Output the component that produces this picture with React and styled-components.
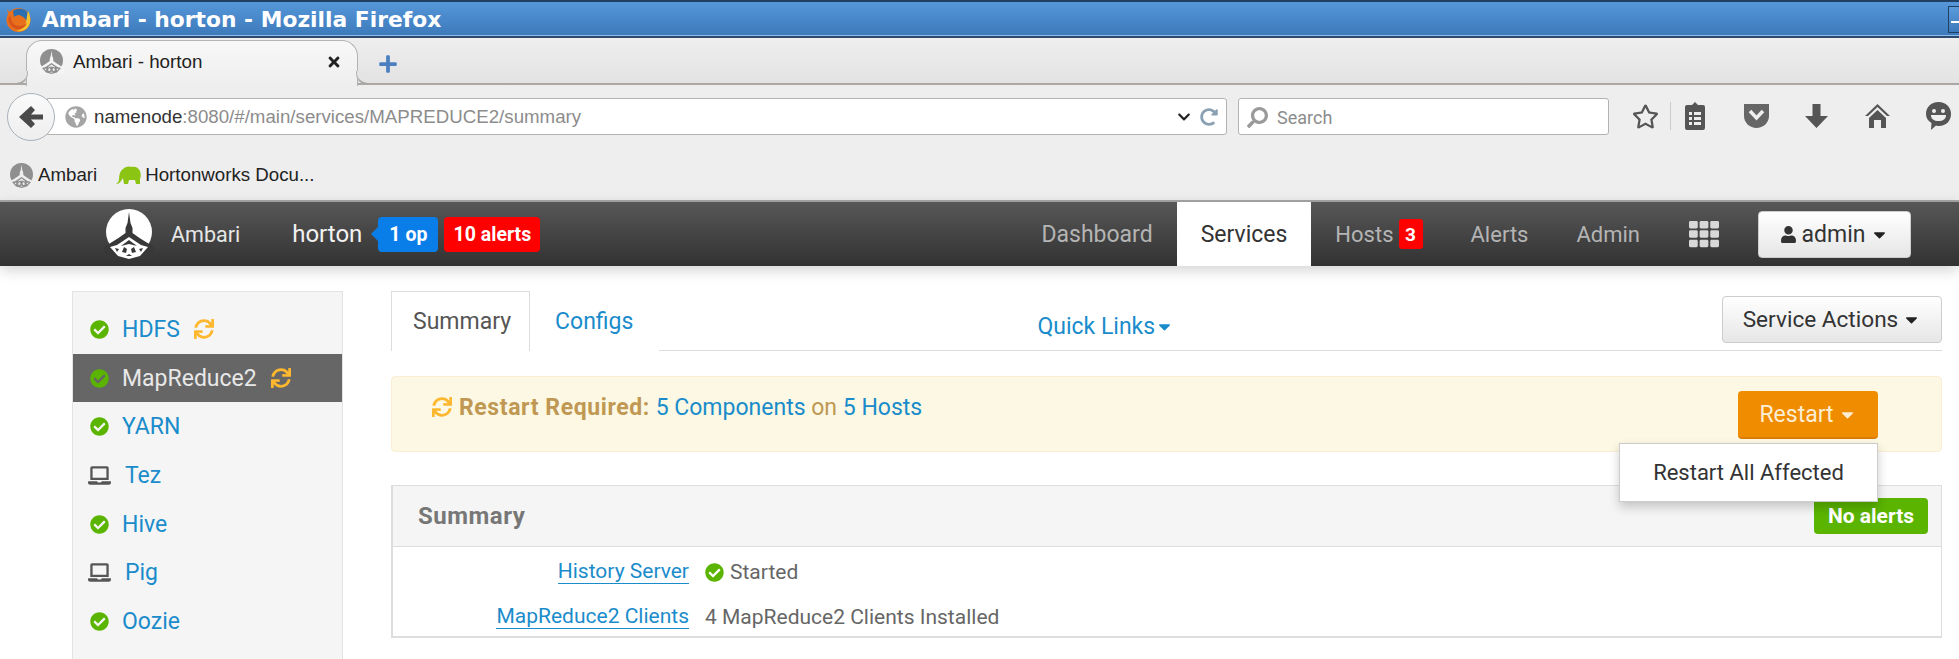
import React from "react";
import styled, { createGlobalStyle } from "styled-components";
import { FaCheckCircle, FaSync, FaLaptop, FaUser, FaTh, FaCaretDown, FaRegStar, FaChevronDown, FaRedoAlt, FaSearch, FaTimes, FaPlus, FaGlobeAmericas } from "react-icons/fa";

const GlobalStyle = createGlobalStyle`
  html, body {
    margin: 0;
    padding: 0;
    background: #fff;
    font-family: Roboto, "Liberation Sans", sans-serif;
    overflow: hidden;
  }
`;

const Page = styled.div`
  width: 1959px;
  height: 659px;
  overflow: hidden;
  display: flex;
  flex-direction: column;
`;

/* ---- browser chrome ---- */

const TitleBar = styled.div`
  height: 34px;
  padding: 0 0 0 6px;
  display: flex;
  align-items: center;
  gap: 11px;
  color: #fff;
  font: bold 21.8px "DejaVu Sans", sans-serif;
  border-top: 2px solid #1f3f63;
  border-bottom: 2px solid #2b4a6e;
  box-shadow: inset 0 -1px 0 #8fbbe8;
  background: linear-gradient(#5597d9, #3c79ba);
`;

const WindowButton = styled.div`
  margin-left: auto;
  width: 10px;
  height: 25px;
  border: 1px solid #1f3f63;
  border-right: 0;
  background: linear-gradient(#5a9bdc, #3c79ba);
  position: relative;

  &::after {
    content: "";
    position: absolute;
    left: 2px;
    bottom: 9px;
    width: 8px;
    height: 2px;
    background: #fff;
  }
`;

const TabStrip = styled.div`
  height: 47px;
  box-sizing: border-box;
  padding: 2px 0 0 26px;
  display: flex;
  align-items: stretch;
  background: linear-gradient(#efeeee, #e4e3e3);
  border-bottom: 2px solid #aaa7a5;
`;

const BrowserTab = styled.div`
  width: 332px;
  height: 46px;
  box-sizing: border-box;
  padding: 0 15px 4px 12px;
  display: flex;
  align-items: center;
  gap: 9px;
  font: 18.8px "Liberation Sans", sans-serif;
  color: #222;
  background: linear-gradient(#f8f8f8, #efeeee);
  border: 1px solid #b5b3b1;
  border-bottom: 0;
  border-radius: 16px 16px 0 0;
  position: relative;
  z-index: 1;

  &::before,
  &::after {
    content: "";
    position: absolute;
    bottom: 1px;
    width: 12px;
    height: 14px;
    box-sizing: border-box;
    background: #e5e4e4;
    border-bottom: 2px solid #aaa7a5;
  }

  &::before {
    left: -11px;
    border-right: 1px solid #b5b3b1;
    border-bottom-right-radius: 12px;
  }

  &::after {
    right: -11px;
    border-left: 1px solid #b5b3b1;
    border-bottom-left-radius: 12px;
  }
`;

const TabClose = styled(FaTimes)`
  margin-left: auto;
  font-size: 16px;
  color: #222;
`;

const NewTab = styled(FaPlus)`
  margin: 14px 0 0 20px;
  font-size: 20px;
  color: #4b7fc0;
`;

const ChromeBody = styled.div`
  height: 115px;
  background: #efeeee;
  border-bottom: 2px solid #a9a7a5;
  display: flex;
  flex-direction: column;
`;

const NavToolbar = styled.div`
  height: 62px;
  padding-left: 7px;
  display: flex;
  align-items: center;
`;

const BackButton = styled.div`
  width: 48px;
  height: 48px;
  box-sizing: border-box;
  flex: none;
  display: flex;
  align-items: center;
  justify-content: center;
  border-radius: 50%;
  border: 1px solid #a9b1b9;
  background: linear-gradient(#fafafa, #eeeeee);
  position: relative;
  z-index: 1;
  margin-top: 2px;
`;

const UrlBar = styled.div`
  width: 1180px;
  height: 37px;
  box-sizing: border-box;
  margin-left: -8px;
  padding: 2px 8px 0 17px;
  display: flex;
  align-items: center;
  background: #fff;
  border: 1px solid #b5b3b1;
  border-radius: 0 3px 3px 0;
  font: 18.7px "Liberation Sans", sans-serif;
  color: #8c8c8c;
`;

const Globe = styled(FaGlobeAmericas)`
  font-size: 22px;
  color: #a5a5a5;
  margin-right: 7px;
`;

const Host = styled.span`
  color: #333;
`;

const UrlIcons = styled.div`
  margin-left: auto;
  display: flex;
  align-items: center;
  gap: 9px;
`;

const Chevron = styled(FaChevronDown)`
  font-size: 14px;
  color: #222;
`;

const Reload = styled(FaRedoAlt)`
  font-size: 18px;
  color: #8aa0b3;
`;

const SearchBar = styled.div`
  width: 371px;
  height: 37px;
  box-sizing: border-box;
  margin-left: 11px;
  padding: 2px 0 0 8px;
  display: flex;
  align-items: center;
  gap: 9px;
  background: #fff;
  border: 1px solid #b5b3b1;
  border-radius: 3px;
  font: 18px Roboto, sans-serif;
  color: #8c8c8c;
`;

const SearchIcon = styled(FaSearch)`
  font-size: 21px;
  color: #9a9a9a;
  transform: scaleX(-1);
`;

const ToolIcons = styled.div`
  margin-left: 23px;
  display: flex;
  align-items: center;
  color: #555;
`;

const ToolSlot = styled.div`
  width: ${(p) => p.$w}px;
  display: flex;
  align-items: center;
`;

const Separator = styled.div`
  width: 1px;
  height: 28px;
  background: #ccc;
  margin-right: 12px;
`;

const Bookmarks = styled.div`
  height: 51px;
  box-sizing: border-box;
  padding: 5px 0 0 9px;
  display: flex;
  align-items: center;
  font: 18.7px "Liberation Sans", sans-serif;
  color: #222;
`;

const Bookmark = styled.div`
  display: flex;
  align-items: center;
  gap: 4px;
  margin-right: ${(p) => p.$gap || 0}px;
`;

/* ---- ambari top bar ---- */

const TopBar = styled.div`
  height: 64px;
  flex: none;
  display: flex;
  align-items: center;
  padding-left: 104px;
  background: linear-gradient(#575757, #323232);
  box-shadow: 0 4px 14px rgba(0, 0, 0, 0.18);
  position: relative;
  z-index: 2;
`;

const Brand = styled.span`
  margin-left: 17px;
  font-size: 21.5px;
  color: #e6e6e6;
`;

const Cluster = styled.span`
  margin-left: 52px;
  font-size: 24px;
  color: #f2f2f2;
`;

const OpsBadge = styled.span`
  margin-left: 16px;
  width: 60px;
  height: 35px;
  border-radius: 4px;
  background: #0a7ee8;
  color: #fff;
  font-size: 19.5px;
  font-weight: bold;
  display: flex;
  align-items: center;
  justify-content: center;
  position: relative;

  &::before {
    content: "";
    position: absolute;
    left: -7px;
    top: 10px;
    border: 7px solid transparent;
    border-left: 0;
    border-right-color: #0a7ee8;
  }
`;

const AlertsBadge = styled(OpsBadge)`
  margin-left: 6px;
  width: 96px;
  background: #f00;

  &::before {
    display: none;
  }
`;

const NavLinks = styled.nav`
  margin-left: auto;
  display: flex;
  align-items: center;
  height: 100%;
  padding-right: 48px;
`;

const NavItem = styled.a`
  height: 100%;
  box-sizing: border-box;
  padding: 0 24px;
  display: flex;
  align-items: center;
  font-size: ${(p) => (p.$compact ? 22 : 23)}px;
  color: ${(p) => (p.$active ? "#333" : "#b4b4b4")};
  background: ${(p) => (p.$active ? "#fff" : "transparent")};
`;

const CountBadge = styled.span`
  margin-left: 5px;
  width: 24px;
  height: 30px;
  border-radius: 3px;
  background: #f00;
  color: #fff;
  font-size: 19px;
  font-weight: bold;
  display: flex;
  align-items: center;
  justify-content: center;
`;

const AppsIcon = styled(FaTh)`
  margin: 0 39px 0 25px;
  font-size: 30px;
  color: #d8d8d8;
`;

const AdminButton = styled.button`
  width: 153px;
  height: 47px;
  padding: 0;
  display: flex;
  align-items: center;
  justify-content: center;
  gap: 5px;
  font: 23px Roboto, sans-serif;
  color: #333;
  border: 1px solid #ccc;
  border-radius: 4px;
  background: linear-gradient(#fff, #e6e6e6);
`;

const Caret = styled(FaCaretDown)`
  font-size: 19px;
  color: ${(p) => p.$color || "#222"};
`;

/* ---- page body ---- */

const Main = styled.div`
  flex: 1;
  display: flex;
  padding: 25px 0 0 72px;
`;

const Sidebar = styled.aside`
  width: 271px;
  box-sizing: border-box;
  padding-top: 13px;
  background: #f5f5f5;
  border: 1px solid #e3e3e3;
  border-bottom: 0;
`;

const ServiceRow = styled.div`
  height: 48.7px;
  padding-left: 17px;
  display: flex;
  align-items: center;
  font-size: 23px;
  color: ${(p) => (p.$active ? "#e8e8e8" : "#1a8ccb")};
  background: ${(p) => (p.$active ? "#666" : "transparent")};
`;

const Healthy = styled(FaCheckCircle)`
  font-size: ${(p) => p.$size || 19}px;
  color: #5ab400;
  flex: none;
  margin-right: ${(p) => p.$gap || 13}px;
`;

const Client = styled(FaLaptop)`
  font-size: 23px;
  color: #555;
  margin: 0 14px 0 -2px;
`;

const Restarting = styled(FaSync)`
  font-size: 20px;
  color: #fdb82f;
  margin-left: ${(p) => p.$left || 14}px;
  flex: none;
`;

const Content = styled.section`
  width: 1551px;
  margin-left: 48px;
`;

const TabRow = styled.div`
  height: 60px;
  box-sizing: border-box;
  display: flex;
  align-items: stretch;
  border-bottom: 1px solid #ddd;
  font-size: 23px;
`;

const PageTab = styled.a`
  padding: ${(p) => (p.$active ? "0 18px 1px 21px" : "0 25px 1px 24px")};
  height: 60px;
  box-sizing: border-box;
  display: flex;
  align-items: center;
  color: ${(p) => (p.$active ? "#555" : "#1a8ccb")};
  background: #fff;
  border: 1px solid ${(p) => (p.$active ? "#ddd" : "transparent")};
  border-bottom: 0;
`;

const QuickLinks = styled.a`
  margin: 21px 0 0 378px;
  height: 28px;
  display: flex;
  align-items: center;
  color: #1a8ccb;
`;

const ServiceActions = styled.button`
  margin: 5px 0 0 auto;
  width: 220px;
  height: 47px;
  padding: 0;
  display: flex;
  align-items: center;
  justify-content: center;
  gap: 4px;
  font: 22.6px Roboto, sans-serif;
  color: #333;
  border: 1px solid #ccc;
  border-radius: 4px;
  background: linear-gradient(#fff, #e6e6e6);
`;

const RestartAlert = styled.div`
  margin-top: 25px;
  height: 76px;
  box-sizing: border-box;
  padding: 14px 63px 0 39px;
  display: flex;
  align-items: flex-start;
  justify-content: space-between;
  font-size: 23px;
  color: #c09853;
  background: #fcf8e3;
  border: 1px solid #fbeed5;
  border-radius: 4px;
`;

const AlertText = styled.div`
  height: 32px;
  display: flex;
  align-items: center;
`;

const AlertLine = styled.span`
  margin-left: 7px;
`;

const Bold = styled.strong`
  font-weight: bold;
  letter-spacing: 0.6px;
`;

const BlueLink = styled.a`
  color: #1a8ccb;
`;

const RestartWrap = styled.div`
  position: relative;
`;

const RestartButton = styled.button`
  width: 140px;
  height: 48px;
  padding: 0;
  display: flex;
  align-items: center;
  justify-content: center;
  gap: 4px;
  font: 23px Roboto, sans-serif;
  color: #fbeed5;
  border: 0;
  border-bottom: 2px solid #d97c00;
  border-radius: 4px;
  background: #f08c00;
`;

const DropMenu = styled.div`
  position: absolute;
  top: 52px;
  right: 0;
  width: 259px;
  height: 59px;
  box-sizing: border-box;
  display: flex;
  align-items: center;
  justify-content: center;
  font-size: 22px;
  color: #333;
  white-space: nowrap;
  background: #fff;
  border: 1px solid #ccc;
  box-shadow: 0 5px 10px rgba(0, 0, 0, 0.2);
  z-index: 3;
`;

const Panel = styled.div`
  margin-top: 33px;
  height: 153px;
  box-sizing: border-box;
  border: 2px solid #ddd;
  border-top-width: 1px;
  border-right-width: 1px;
`;

const PanelHead = styled.div`
  height: 61px;
  box-sizing: border-box;
  padding: 0 13px 0 25px;
  display: flex;
  align-items: center;
  justify-content: space-between;
  background: #f5f5f5;
  border-bottom: 1px solid #ddd;
`;

const PanelTitle = styled.h3`
  margin: 0;
  font-size: 24px;
  letter-spacing: 0.5px;
  font-weight: bold;
  color: #777;
`;

const GoodBadge = styled.span`
  width: 114px;
  height: 36px;
  display: flex;
  align-items: center;
  justify-content: center;
  border-radius: 4px;
  font-size: 21px;
  font-weight: bold;
  color: #fff;
  background: #5ab400;
`;

const PanelBody = styled.div`
  padding-top: 3px;
`;

const SummaryRow = styled.div`
  height: 44.5px;
  display: grid;
  grid-template-columns: 296px 1fr;
  column-gap: 16px;
  align-items: center;
  font-size: 21px;
  color: #666;
`;

const SummaryLabel = styled.a`
  justify-self: end;
  color: #1a8ccb;
  border-bottom: 1px solid #1a8ccb;
  line-height: 23px;
`;

const SummaryValue = styled.div`
  display: flex;
  align-items: center;
`;

/* ---- drawings ---- */

const AmbariLogo = ({ size, disc = "#fff", dark = "#383838", speck = "#fff" }) => (
  <svg width={size} height={size} viewBox="0 0 50 50" style={{ flex: "none" }}>
    <circle cx="25" cy="23" r="23" fill={disc} />
    <path d="M25 3l1.500 11 2 5v5l7 5 14.500 9v12H0V38l14.500-9 7-5v-5l2-5z" fill={dark} />
    <path d="M25 28l12 8 7 2-8 9-11 3-11-3-8-9 7-2z" fill={speck} />
    <path d="M25 31l8 6-8-2-8 2zM20 38l3 2-1 4-4-1zM30 38l-3 2 1 4 4-1zM11 39l4 1-2 3zM39 39l-4 1 2 3zM22 47h6l-3-2z" fill={dark} />
  </svg>
);

const FirefoxLogo = () => (
  <svg width="25" height="27" viewBox="0 0 25 27" style={{ flex: "none" }}>
    <circle cx="12.500" cy="14" r="12" fill="#e8701c" />
    <path d="M7 5c4-3 11-3 14 1 3 4 3 9 1 13-1-6-5-9-9-10-2 0-4 1-5 2z" fill="#2c6fb0" />
    <path d="M22 5c3 5 3 12 0 16-3 4-8 5-12 4 5-1 9-4 10-9 1-4 1-8 2-11z" fill="#f6c131" />
    <path d="M5 11c0 5 3 9 8 9 3 0 6-1 8-3-2 5-7 7-11 6-6-2-9-8-7-14z" fill="#d9541a" />
    <path d="M1 3c1 2 3 3 5 4L3 12z" fill="#e8701c" />
  </svg>
);

const Elephant = () => (
  <svg width="25" height="20" viewBox="0 0 25 20" style={{ flex: "none" }}>
    <path d="M0 19c1-1 3-2 3-5 0-4 1-8 4-10 2-2 5-3 8-2 4-1 7 0 9 4 1 3 1 6 0 8v5h-4l-1-4h-6l-1 4H8l-1-6-2 3c-1 2-3 3-5 3z" fill="#8cc414" />
  </svg>
);

const BackArrow = () => (
  <svg width="24" height="24" viewBox="0 0 24 24">
    <path d="M12 1l4 4-4 4.500h12v5H12l4 4.500-4 4L0 12z" fill="#4a4a4a" />
  </svg>
);

const DownArrow = () => (
  <svg width="23" height="24" viewBox="0 0 23 24">
    <path d="M7.500 0h8v12H23L11.500 24 0 12h7.500z" fill="#555" />
  </svg>
);

const Clipboard = () => (
  <svg width="24" height="30" viewBox="0 0 24 30">
    <path d="M9 4l3-3 3 3h5a2 2 0 0 1 2 2v21a2 2 0 0 1-2 2H4a2 2 0 0 1-2-2V6a2 2 0 0 1 2-2z" fill="#555" />
    <path d="M6 11h3v3H6zM11 11h7v3h-7zM6 16h3v3H6zM11 16h7v3h-7zM6 21h3v3H6zM11 21h7v3h-7z" fill="#efeeee" />
  </svg>
);

const Pocket = () => (
  <svg width="27" height="26" viewBox="0 0 27 26">
    <path d="M1 1h25v12c0 7-6 12-12.500 12S1 20 1 13z" fill="#666" />
    <path d="M7 8l6.500 7L20 8" fill="none" stroke="#efeeee" strokeWidth="3.500" />
  </svg>
);

const Home = () => (
  <svg width="25" height="26" viewBox="0 0 25 26">
    <path d="M12.500 1L25 13h-3L12.500 4 3 13H0z" fill="#555" />
    <path d="M12.500 7L21 15v10h-5v-8H9v8H4V15z" fill="#555" />
  </svg>
);

const Hello = () => (
  <svg width="27" height="30" viewBox="0 0 27 30">
    <path d="M13.500 1C21 1 26 6 26 13s-5 12-12 12c-1 0-2 0-3-.5L6 29l.5-7C3 20 1 17 1 13 1 6 6 1 13.500 1z" fill="#555" />
    <circle cx="9" cy="10" r="2" fill="#efeeee" />
    <circle cx="18" cy="10" r="2" fill="#efeeee" />
    <path d="M6 14h15c0 4-3 6-7.500 6S6 18 6 14z" fill="#efeeee" />
  </svg>
);

const services = [
  { name: "HDFS", healthy: true, restart: true },
  { name: "MapReduce2", healthy: true, restart: true, active: true },
  { name: "YARN", healthy: true },
  { name: "Tez" },
  { name: "Hive", healthy: true },
  { name: "Pig" },
  { name: "Oozie", healthy: true },
];

const App = () => (
  <Page>
    <GlobalStyle />
    <TitleBar>
      <FirefoxLogo />
      Ambari - horton - Mozilla Firefox
      <WindowButton />
    </TitleBar>
    <TabStrip>
      <BrowserTab>
        <AmbariLogo size={25} disc="#8f8f8f" dark="#f4f4f4" speck="#8f8f8f" />
        Ambari - horton
        <TabClose />
      </BrowserTab>
      <NewTab />
    </TabStrip>
    <ChromeBody>
      <NavToolbar>
        <BackButton>
          <BackArrow />
        </BackButton>
        <UrlBar>
          <Globe />
          <Host>namenode</Host>:8080/#/main/services/MAPREDUCE2/summary
          <UrlIcons>
            <Chevron />
            <Reload />
          </UrlIcons>
        </UrlBar>
        <SearchBar>
          <SearchIcon />
          Search
        </SearchBar>
        <ToolIcons>
          <ToolSlot $w={38}>
            <FaRegStar size={27} />
          </ToolSlot>
          <Separator />
          <ToolSlot $w={60}>
            <Clipboard />
          </ToolSlot>
          <ToolSlot $w={62}>
            <Pocket />
          </ToolSlot>
          <ToolSlot $w={60}>
            <DownArrow />
          </ToolSlot>
          <ToolSlot $w={60}>
            <Home />
          </ToolSlot>
          <ToolSlot $w={27}>
            <Hello />
          </ToolSlot>
        </ToolIcons>
      </NavToolbar>
      <Bookmarks>
        <Bookmark $gap={19}>
          <AmbariLogo size={25} disc="#8f8f8f" dark="#efeeee" speck="#8f8f8f" />
          Ambari
        </Bookmark>
        <Bookmark>
          <Elephant />
          Hortonworks Docu...
        </Bookmark>
      </Bookmarks>
    </ChromeBody>
    <TopBar>
      <AmbariLogo size={50} />
      <Brand>Ambari</Brand>
      <Cluster>horton</Cluster>
      <OpsBadge>1 op</OpsBadge>
      <AlertsBadge>10 alerts</AlertsBadge>
      <NavLinks>
        <NavItem>Dashboard</NavItem>
        <NavItem $active>Services</NavItem>
        <NavItem $compact>
          Hosts<CountBadge>3</CountBadge>
        </NavItem>
        <NavItem $compact>Alerts</NavItem>
        <NavItem $compact>Admin</NavItem>
        <AppsIcon />
        <AdminButton>
          <FaUser size={17} />
          admin
          <Caret />
        </AdminButton>
      </NavLinks>
    </TopBar>
    <Main>
      <Sidebar>
        {services.map((s) => (
          <ServiceRow key={s.name} $active={s.active}>
            {s.healthy ? <Healthy /> : <Client />}
            {s.name}
            {s.restart && <Restarting />}
          </ServiceRow>
        ))}
      </Sidebar>
      <Content>
        <TabRow>
          <PageTab $active>Summary</PageTab>
          <PageTab>Configs</PageTab>
          <QuickLinks>
            Quick Links
            <Caret $color="#1a8ccb" />
          </QuickLinks>
          <ServiceActions>
            Service Actions
            <Caret />
          </ServiceActions>
        </TabRow>
        <RestartAlert>
          <AlertText>
            <Restarting $left={1} />
            <AlertLine>
              <Bold>Restart Required:</Bold> <BlueLink>5 Components</BlueLink> on <BlueLink>5 Hosts</BlueLink>
            </AlertLine>
          </AlertText>
          <RestartWrap>
            <RestartButton>
              Restart
              <Caret $color="#fbeed5" />
            </RestartButton>
            <DropMenu>Restart All Affected</DropMenu>
          </RestartWrap>
        </RestartAlert>
        <Panel>
          <PanelHead>
            <PanelTitle>Summary</PanelTitle>
            <GoodBadge>No alerts</GoodBadge>
          </PanelHead>
          <PanelBody>
            <SummaryRow>
              <SummaryLabel>History Server</SummaryLabel>
              <SummaryValue>
                <Healthy $gap={6} />
                Started
              </SummaryValue>
            </SummaryRow>
            <SummaryRow>
              <SummaryLabel>MapReduce2 Clients</SummaryLabel>
              <SummaryValue>4 MapReduce2 Clients Installed</SummaryValue>
            </SummaryRow>
          </PanelBody>
        </Panel>
      </Content>
    </Main>
  </Page>
);

export default App;
